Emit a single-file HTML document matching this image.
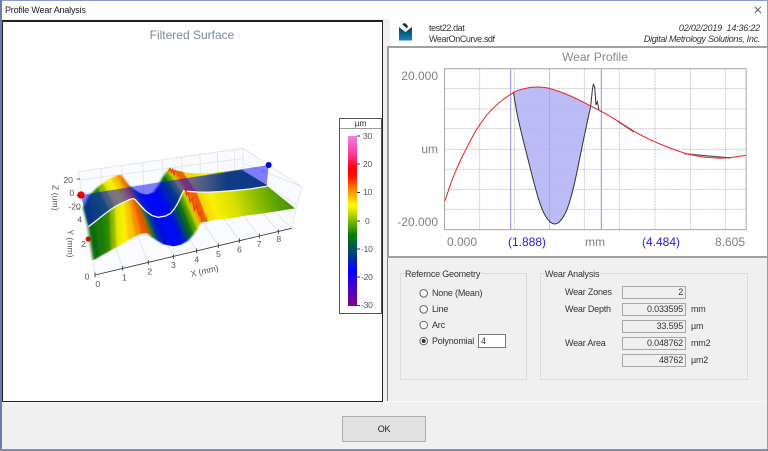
<!DOCTYPE html>
<html><head><meta charset="utf-8"><title>Profile Wear Analysis</title>
<style>
html,body{margin:0;padding:0;background:#f0f0f0;width:768px;height:451px;overflow:hidden}
#w{position:relative;width:768px;height:451px;overflow:hidden;background:#f0f0f0;font-family:"Liberation Sans",sans-serif;font-size:9px;letter-spacing:-.2px;color:#333;filter:blur(.3px)}
#w div{position:absolute;box-sizing:border-box}
.t{white-space:nowrap;line-height:12px;height:12px}
.h{letter-spacing:-.42px}
.a{letter-spacing:0;font-size:12px;height:14px;line-height:14px;color:#808080}
.b{left:622px;width:64px;height:13px;background:#f0f0f0;border:1px solid #a8a8a8;text-align:right;padding-right:2px;line-height:11px;font-size:9px;color:#333}
svg{position:absolute;overflow:visible}
</style></head><body><div id="w">
<div style="left:0;top:0;width:768px;height:19px;background:#fff"></div>
<div class="t" style="left:5px;top:4px;color:#222">Profile Wear Analysis</div>
<div style="left:390px;top:19px;width:378px;height:27px;background:#fff"></div>
<div style="left:2px;top:20px;width:381px;height:382px;background:#fff;border:1px solid #222;border-top-width:2px"></div>
<div class="t" style="left:2px;width:380px;top:29px;text-align:center;font-size:12px;letter-spacing:0;color:#7d8a98">Filtered Surface</div>

<svg style="left:0;top:130px" width="310" height="190" viewBox="0 0 930 570">
<defs>
<filter id="f" x="-5%" y="-5%" width="110%" height="110%"><feGaussianBlur stdDeviation="4 1"/></filter>
<linearGradient id="r" gradientUnits="userSpaceOnUse" x1="625" y1="273" x2="868" y2="187">
<stop offset="0" stop-color="#f0d800"/><stop offset=".12" stop-color="#f8f000"/><stop offset=".35" stop-color="#d8e000"/><stop offset=".6" stop-color="#90c000"/><stop offset=".8" stop-color="#60a400"/><stop offset="1" stop-color="#4a9000"/>
</linearGradient>
<linearGradient id="g" gradientUnits="userSpaceOnUse" x1="560" y1="0" x2="680" y2="0">
<stop offset="0" stop-color="#1a7010" stop-opacity="0"/><stop offset="1" stop-color="#1a7010" stop-opacity=".95"/>
</linearGradient>
</defs>
<polygon points="235,125 730,55 905,170 875,295 285,435" fill="#f9fbfe"/>
<g fill="none" stroke="#e4e7ea" stroke-width="3">
<path d="M235,125L730,55L905,170L875,295M235,125L262,300L285,435M730,55L728,150L875,295M905,170L730,100M892,225L730,125"/>
<path d="M303,115L305,225L368,415M365,108L370,215L445,397M428,98L432,205L520,380M488,90L490,195L590,362M545,80L548,185L655,347M600,75L602,170L718,332M652,68L655,160L778,318M703,60L705,150L835,305"/>
<path d="M240,150L730,85M250,190L728,120"/>
</g>
<circle cx="265" cy="327" r="8" fill="#f00000"/>
<g filter="url(#f)" stroke-width="2">
<polygon fill="#0a6a10" stroke="#0a6a10" points="280,390 265,290 250,235 265,200 285,275 300,378"/>
<polygon fill="#1a7a08" stroke="#1a7a08" points="300,378 285,275 265,200 278,188 310,255 320,367"/>
<polygon fill="#2a8a00" stroke="#2a8a00" points="320,367 310,255 278,188 295,170 330,240 335,358"/>
<polygon fill="#90b800" stroke="#90b800" points="335,358 330,240 295,170 310,160 345,230 350,350"/>
<polygon fill="#e8e800" stroke="#e8e800" points="350,350 345,230 310,160 322,152 360,222 365,342"/>
<polygon fill="#f8f000" stroke="#f8f000" points="365,342 360,222 322,152 335,145 375,215 385,330"/>
<polygon fill="#f8c800" stroke="#f8c800" points="385,330 375,215 335,145 350,138 388,209 405,318"/>
<polygon fill="#f49000" stroke="#f49000" points="405,318 388,209 350,138 362,135 398,206 425,310"/>
<polygon fill="#f05800" stroke="#f05800" points="425,310 398,206 362,135 368,142 405,208 440,308"/>
<polygon fill="#c86000" stroke="#c86000" points="440,308 405,208 368,142 385,165 420,225 455,320"/>
<polygon fill="#207010" stroke="#207010" points="455,320 420,225 385,165 400,178 437,243 470,330"/>
<polygon fill="#0030a0" stroke="#0030a0" points="470,330 437,243 400,178 420,190 455,256 490,342"/>
<polygon fill="#0010e0" stroke="#0010e0" points="490,342 455,256 420,190 440,195 475,262 520,348"/>
<polygon fill="#0008f0" stroke="#0008f0" points="520,348 475,262 440,195 460,188 497,258 540,344"/>
<polygon fill="#0008e8" stroke="#0008e8" points="540,344 497,258 460,188 470,175 512,250 552,338"/>
<polygon fill="#0020b0" stroke="#0020b0" points="552,338 512,250 470,175 478,163 522,238 563,332"/>
<polygon fill="#005050" stroke="#005050" points="563,332 522,238 478,163 487,145 532,222 572,322"/>
<polygon fill="#107010" stroke="#107010" points="572,322 532,222 487,145 495,133 540,205 582,310"/>
<polygon fill="#50a000" stroke="#50a000" points="582,310 540,205 495,133 503,122 547,190 592,295"/>
<polygon fill="#c8d000" stroke="#c8d000" points="592,295 547,190 503,122 510,115 553,180 600,282"/>
<polygon fill="#f0a000" stroke="#f0a000" points="600,282 553,180 510,115 520,120 562,182 606,276"/>
<polygon fill="#f06000" stroke="#f06000" points="606,276 562,182 520,120 550,127 590,184 625,273"/>
</g>
<polygon fill="url(#r)" points="625,273 590,184 550,127 585,130 625,130 670,125 725,118 800,165 800,167 885,235 790,250 730,258 690,265 650,269"/>
<polygon fill="url(#g)" points="560,146 725,120 800,165 800,167 750,175 700,180 660,183 620,185 590,184 562,182"/>
<g fill="none" stroke="#f03000" stroke-width="3">
<path d="M505,125L510,115L514,128L518,118L522,135L526,122"/>
<path d="M555,175L560,195L565,185L570,215L577,205L583,240L590,225L597,255L603,245L605,275" stroke="#f04000" stroke-width="4"/>
</g>
<polygon points="243,195 806,105 800,167 750,175 700,180 660,183 620,185 590,184 562,182 553,180 547,190 540,205 532,222 522,238 512,250 497,258 475,262 455,256 437,243 420,225 405,208 398,206 388,209 375,215 360,222 345,230 330,240 310,255 285,275 265,290" fill="#0000ff" fill-opacity=".5"/>
<path d="M265,290L285,275L310,255L330,240L345,230L360,222L375,215L388,209L398,206L405,208L420,225L437,243L455,256L475,262L497,258L512,250L522,238L532,222L540,205L547,190L553,180" fill="none" stroke="#f0f0f0" stroke-width="4" stroke-linejoin="round"/>
<path d="M562,184L590,186L620,187L660,185L700,182L750,177L800,169" fill="none" stroke="#f0f0f0" stroke-width="4"/>
<circle cx="243" cy="195" r="11" fill="#f00000"/>
<circle cx="806" cy="105" r="9" fill="#0000e8"/>
<path d="M285,435L875,295M285,428L285,442M368,408L368,422M445,390L445,404M520,373L520,387M590,355L590,369M655,340L655,354M718,325L718,339M778,311L778,325M835,298L835,312M230,147L240,147M230,197L240,197M230,237L240,237" stroke="#333" stroke-width="2.5" fill="none"/>
<g font-family="Liberation Sans,sans-serif" font-size="26" fill="#555" letter-spacing="0">
<text x="190" y="159">20</text><text x="208" y="198">0</text><text x="205" y="238">-20</text><text x="232" y="278">4</text><text x="243" y="351">2</text><text x="254" y="449">0</text>
<text x="286" y="471">0</text><text x="366" y="451">1</text><text x="442" y="433">2</text><text x="513" y="414">3</text><text x="583" y="398">4</text><text x="648" y="381">5</text><text x="711" y="367">6</text><text x="770" y="351">7</text><text x="829" y="336">8</text>
<text transform="translate(157,165) rotate(90)">Z (um)</text>
<text transform="translate(202,298) rotate(90)">Y (mm)</text>
<text transform="translate(574,441) rotate(-13)">X (mm)</text>
</g>
</svg>

<div style="left:339px;top:118px;width:43px;height:196px;background:#fff;border:1px solid #555"></div>
<div style="left:340px;top:128px;width:41px;height:1px;background:#999"></div>
<div class="t" style="left:340px;width:41px;top:117px;text-align:center;color:#333;font-size:8.5px">µm</div>
<div style="left:348px;top:136px;width:9px;height:170px;background:linear-gradient(#f080e0 0,#ff40a0 10%,#ff0000 19%,#ff1000 24%,#ff8000 31%,#ffff00 41%,#90c000 49%,#008000 58%,#005060 67%,#0000ff 79%,#4000d0 88%,#800090 100%)"></div>
<svg style="left:0;top:0" width="768" height="451"><path d="M357,136h3M357,164h3M357,192.500h3M357,221h3M357,249h3M357,277h3M357,305.500h3" stroke="#333"/></svg>
<div class="t" style="left:363px;top:130px;font-size:8.5px;color:#555">30</div>
<div class="t" style="left:363px;top:158px;font-size:8.5px;color:#555">20</div>
<div class="t" style="left:363px;top:186px;font-size:8.5px;color:#555">10</div>
<div class="t" style="left:365px;top:215px;font-size:8.5px;color:#555">0</div>
<div class="t" style="left:361px;top:243px;font-size:8.5px;color:#555">-10</div>
<div class="t" style="left:361px;top:271px;font-size:8.5px;color:#555">-20</div>
<div class="t" style="left:361px;top:299px;font-size:8.5px;color:#555">-30</div>

<svg style="left:399px;top:23px" width="13" height="18" viewBox="0 0 13 18"><defs><linearGradient id="l" x1="0" y1="0" x2="0" y2="1"><stop offset="0" stop-color="#0a3a60"/><stop offset="1" stop-color="#1088b8"/></linearGradient></defs><path d="M0,4L6.500,9L13,4V17.500H0Z" fill="url(#l)"/><path d="M3,1L6,0L9,3L8,5.500Z" fill="#103050"/></svg>
<div class="t h" style="left:429px;top:22px;color:#333">test22.dat</div>
<div class="t h" style="left:429px;top:33px;color:#333">WearOnCurve.sdf</div>
<div class="t" style="right:8px;top:22px;font-style:italic;color:#333;white-space:pre">02/02/2019  14:36:22</div>
<div class="t h" style="right:8px;top:33px;font-style:italic;color:#333;letter-spacing:-.3px">Digital Metrology Solutions, Inc.</div>

<div style="left:387px;top:46px;width:381px;height:212px;background:#fff;border:1px solid #a0a0a0;border-width:2px 1px 2px 2px"></div>
<div style="left:387px;top:258px;width:1px;height:143px;background:#808080"></div>
<div style="left:388px;top:401px;width:380px;height:1px;background:#f8f8f8"></div>
<div style="left:2px;top:402px;width:386px;height:1px;background:#f8f8f8"></div>
<div class="t a" style="left:560px;width:70px;top:50px;text-align:center;color:#888">Wear Profile</div>
<svg style="left:384px;top:0" width="384" height="260" viewBox="0 0 1152 780">
<path d="M1112,20L1131,39M1131,20L1112,39" stroke="#555" stroke-width="3"/>
<g stroke="#c0c0c0" stroke-width="2.500" stroke-dasharray="6 3" fill="none">
<path d="M287,206V689M391,206V689M496,206V689M601,206V689M706,206V689M813,206V689M919,206V689M1024,206V689"/>
<path d="M181,266H1087M181,327H1087M181,386H1087M181,448H1087M181,508H1087M181,568H1087M181,628H1087"/>
</g>
<path d="M388,275Q395,320 402,355Q410,390 420,430Q430,470 440,510Q450,550 460,585Q470,620 480,640Q490,660 500,667Q510,675 520,670Q530,665 540,647Q550,630 560,595Q570,560 580,510Q590,460 600,412Q610,365 615,342L620,318Q590,302 560,287Q530,276 500,265Q480,262 460,260Q440,262 420,265Q402,271 388,275Z" fill="#b4b4f4" fill-opacity=".9"/>
<path d="M496,206V689" stroke="#999" stroke-width="2" stroke-dasharray="6 3"/>
<rect x="181.500" y="206" width="905" height="483" fill="none" stroke="#a8a8a8" stroke-width="3"/>
<path d="M380,206V689M652,206V689" stroke="#9090e8" stroke-width="3"/>
<path d="M388,275Q395,320 402,355Q410,390 420,430Q430,470 440,510Q450,550 460,585Q470,620 480,640Q490,660 500,667Q510,675 520,670Q530,665 540,647Q550,630 560,595Q570,560 580,510Q590,460 600,412Q610,365 615,342L620,320L625,270L628,253L632,260L636,315L640,305L645,330L652,335" fill="none" stroke="#333" stroke-width="3"/>
<path d="M700,363L750,396M900,461L1040,474" fill="none" stroke="#555" stroke-width="3.500"/>
<path d="M183,603Q200,550 212,520Q225,490 237,465Q250,440 267,407Q285,375 307,347Q330,320 357,299Q385,278 402,271Q420,265 440,262Q460,260 480,262Q500,265 530,276Q560,287 590,302Q620,318 640,328Q660,338 680,350Q700,362 725,378Q750,395 780,410Q810,425 835,435Q860,445 885,454Q910,463 935,467Q960,472 980,473Q1000,475 1020,474Q1040,473 1085,466" fill="none" stroke="#f02020" stroke-width="3"/>
</svg>
<div class="t a" style="left:390px;width:48px;top:69px;text-align:right">20.000</div>
<div class="t a" style="left:390px;width:48px;top:142px;text-align:right">um</div>
<div class="t a" style="left:390px;width:48px;top:215px;text-align:right">-20.000</div>
<div class="t a" style="left:447px;top:235px">0.000</div>
<div class="t a" style="left:508px;top:235px;color:#2020e0">(1.888)</div>
<div class="t a" style="left:585px;top:235px">mm</div>
<div class="t a" style="left:642px;top:235px;color:#2020e0">(4.484)</div>
<div class="t a" style="left:715px;top:235px">8.605</div>

<div style="left:400px;top:273px;width:127px;height:107px;border:1px solid #dcdcdc"></div>
<div style="left:540px;top:273px;width:208px;height:107px;border:1px solid #dcdcdc"></div>
<div class="t" style="left:405px;top:268px;background:#f0f0f0;padding-right:1px">Refernce Geometry</div>
<div class="t" style="left:545px;top:268px;background:#f0f0f0;padding-right:1px">Wear Analysis</div>
<svg style="left:0;top:0" width="768" height="451" fill="#fff" stroke="#666">
<circle cx="423.700" cy="293.300" r="3.800"/><circle cx="423.700" cy="309.300" r="3.800"/><circle cx="423.700" cy="325" r="3.800"/><circle cx="423.700" cy="341" r="3.800"/><circle cx="423.700" cy="341" r="2" fill="#333" stroke="none"/>
</svg>
<div class="t" style="left:432px;top:287px">None (Mean)</div>
<div class="t" style="left:432px;top:303px">Line</div>
<div class="t" style="left:432px;top:319px">Arc</div>
<div class="t" style="left:432px;top:335px">Polynomial</div>
<div style="left:478px;top:334px;width:28px;height:14px;background:#fff;border:1px solid #777;padding-left:2px;line-height:12px">4</div>
<div class="t" style="left:565px;top:286px">Wear Zones</div>
<div class="t" style="left:565px;top:303px">Wear Depth</div>
<div class="t" style="left:565px;top:337px">Wear Area</div>
<div class="b" style="top:286px">2</div>
<div class="b" style="top:303px">0.033595</div>
<div class="b" style="top:320px">33.595</div>
<div class="b" style="top:337px">0.048762</div>
<div class="b" style="top:354px">48762</div>
<div class="t" style="left:691px;top:303px">mm</div>
<div class="t" style="left:691px;top:320px">µm</div>
<div class="t" style="left:691px;top:337px">mm2</div>
<div class="t" style="left:691px;top:354px">µm2</div>

<div style="left:342px;top:416px;width:84px;height:26px;background:#e1e1e1;border:1px solid #adadad;text-align:center;line-height:24px;color:#222">OK</div>

<div style="left:0;top:0;width:768px;height:1px;background:#8c9ac8"></div>
<div style="left:0;top:0;width:2px;height:451px;background:#6f7ba8"></div>
<div style="right:0;top:0;width:1px;height:451px;background:#8c9ac8"></div>
<div style="left:0;top:449px;width:768px;height:2px;background:#7f8cb8"></div>
</div></body></html>
